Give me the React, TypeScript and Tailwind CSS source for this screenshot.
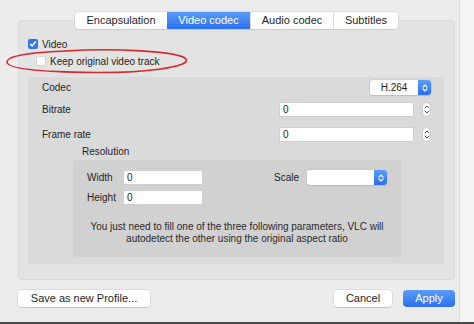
import React from 'react';

const font = { fontFamily: '"Liberation Sans", Arial, sans-serif' };

function Stepper() {
  return (
    <div className="w-[9px] h-[15px] rounded-full bg-white border border-[#c9c9c9] flex flex-col items-center justify-center">
      <svg width="6" height="11" viewBox="0 0 6 11" fill="none" stroke="#555" strokeWidth="1" strokeLinecap="round">
        <path d="M1 4 L3 2 L5 4" />
        <path d="M1 7 L3 9 L5 7" />
      </svg>
    </div>
  );
}

function Popup({ value, width }: { value: string; width: string }) {
  return (
    <div className={`${width} h-[15px] flex rounded-[3px] bg-white shadow-[0_0_0_0.5px_#c4c4c4,0_1px_1px_rgba(0,0,0,0.15)]`}>
      <div className="flex-1 flex items-center justify-center text-[10px] text-[#222]">{value}</div>
      <div className="w-[13px] h-full rounded-r-[3px] bg-gradient-to-b from-[#5b9df9] to-[#2a6ff0] flex items-center justify-center">
        <svg width="6" height="10" viewBox="0 0 6 10" fill="none" stroke="white" strokeWidth="1.2" strokeLinecap="round">
          <path d="M1 4 L3 2 L5 4" />
          <path d="M1 6 L3 8 L5 6" />
        </svg>
      </div>
    </div>
  );
}

function Field({ value, width }: { value: string; width: string }) {
  return (
    <div className={`${width} h-[15px] bg-white border border-[#cfcfcf] flex items-center pl-[3px] text-[10px] text-[#222]`}>
      {value}
    </div>
  );
}

export default function App() {
  const tabs = ['Encapsulation', 'Video codec', 'Audio codec', 'Subtitles'];
  const tabW = ['w-[92px]', 'w-[83px]', 'w-[83px]', 'w-[65px]'];

  return (
    <div className="w-[474px] h-[324px] flex flex-col bg-[#f4f4f4] text-[#1f1f1f] overflow-hidden" style={font}>
      <div className="flex flex-1">
        <div className="relative w-[460px] bg-[#ececec] border-r border-[#dcdcdc] pt-[12px]">
          <div className="ml-[18px] w-[437px]">
            {/* tabs */}
            <div className="relative z-10 flex justify-center">
              <div className="flex h-[17px] rounded-[4px] bg-white shadow-[0_0_0_0.5px_#cdcdcd,0_1px_1px_rgba(0,0,0,0.12)] text-[11px]">
                {tabs.map((t, i) => (
                  <div
                    key={t}
                    className={`${tabW[i]} flex items-center justify-center ${
                      i === 1 ? 'bg-gradient-to-b from-[#5a9cf8] to-[#2d6fef] text-white' : 'text-[#1f1f1f]'
                    } ${i > 1 ? 'border-l border-[#dedede]' : ''}`}
                  >
                    {t}
                  </div>
                ))}
              </div>
            </div>

            {/* panel */}
            <div className="-mt-[9px] h-[260px] bg-[#e3e3e3] rounded-[4px] border border-[#dadada] pt-[18px] px-[9px] text-[10px]">
              <div className="flex items-center gap-[4px] h-[10px]">
                <div className="w-[10px] h-[10px] rounded-[2px] bg-[#2f76f0] flex items-center justify-center">
                  <svg width="8" height="8" viewBox="0 0 8 8" fill="none" stroke="white" strokeWidth="1.4" strokeLinecap="round" strokeLinejoin="round">
                    <path d="M1.5 4.2 L3.2 6 L6.5 1.8" />
                  </svg>
                </div>
                <span>Video</span>
              </div>
              <div className="flex items-center gap-[4px] h-[10px] mt-[7px] ml-[8px]">
                <div className="w-[10px] h-[10px] rounded-[2px] bg-white border border-[#d4d4d4]" />
                <span>Keep original video track</span>
              </div>

              {/* inner panel */}
              <div className="mt-[11px] mr-[1px] h-[187px] bg-[#dadada] rounded-[4px] pt-[3px] pl-[14px] pr-[13px]">
                <div className="flex items-center justify-between h-[15px]">
                  <span>Codec</span>
                  <Popup value="H.264" width="w-[61px]" />
                </div>
                <div className="flex items-center h-[15px] mt-[7px]">
                  <span className="flex-1">Bitrate</span>
                  <Field value="0" width="w-[135px]" />
                  <div className="ml-[8px]"><Stepper /></div>
                </div>
                <div className="flex items-center h-[15px] mt-[10px]">
                  <span className="flex-1">Frame rate</span>
                  <Field value="0" width="w-[135px]" />
                  <div className="ml-[8px]"><Stepper /></div>
                </div>

                <div className="ml-[40px] mt-[3px] h-[12px] flex items-center">Resolution</div>
                <div className="ml-[31px] mr-[30px] mt-[3px] h-[97px] bg-[#d1d1d1] rounded-[3px] pt-[10px] px-[14px]">
                  <div className="flex items-center h-[15px]">
                    <span className="w-[36px]">Width</span>
                    <Field value="0" width="w-[80px]" />
                    <span className="ml-[71px]">Scale</span>
                    <div className="ml-auto"><Popup value="" width="w-[80px]" /></div>
                  </div>
                  <div className="flex items-center h-[15px] mt-[5px]">
                    <span className="w-[36px]">Height</span>
                    <Field value="0" width="w-[80px]" />
                  </div>
                  <div className="mt-[16px] text-center leading-[12px] text-[#2a2a2a] whitespace-nowrap">
                    You just need to fill one of the three following parameters, VLC will
                    <br />
                    autodetect the other using the original aspect ratio
                  </div>
                </div>
              </div>
            </div>

            {/* buttons */}
            <div className="flex items-center mt-[10px] text-[11px]">
              <div className="w-[132px] h-[17px] rounded-[4px] bg-white shadow-[0_0_0_0.5px_#cccccc,0_1px_1px_rgba(0,0,0,0.15)] flex items-center justify-center">
                Save as new Profile...
              </div>
              <div className="ml-auto w-[58px] h-[17px] rounded-[4px] bg-white shadow-[0_0_0_0.5px_#cccccc,0_1px_1px_rgba(0,0,0,0.15)] flex items-center justify-center">
                Cancel
              </div>
              <div className="ml-[11px] w-[52px] h-[17px] rounded-[4px] bg-gradient-to-b from-[#5a9cf8] to-[#2d6fef] text-white flex items-center justify-center">
                Apply
              </div>
            </div>
          </div>

          {/* red annotation ellipse */}
          <svg className="absolute left-[4px] top-[48px]" width="188" height="27" viewBox="0 0 188 27" fill="none">
            <path
              d="M60 3 C110 0 175 3 182 11 C188 19 140 25 90 24.5 C40 24 3 21 3 14 C3 7 30 4 75 2.5"
              stroke="#d42a2a"
              strokeWidth="1.6"
            />
          </svg>
        </div>
      </div>
      <div className="h-[2px] bg-[#4a4a4a]" />
    </div>
  );
}
